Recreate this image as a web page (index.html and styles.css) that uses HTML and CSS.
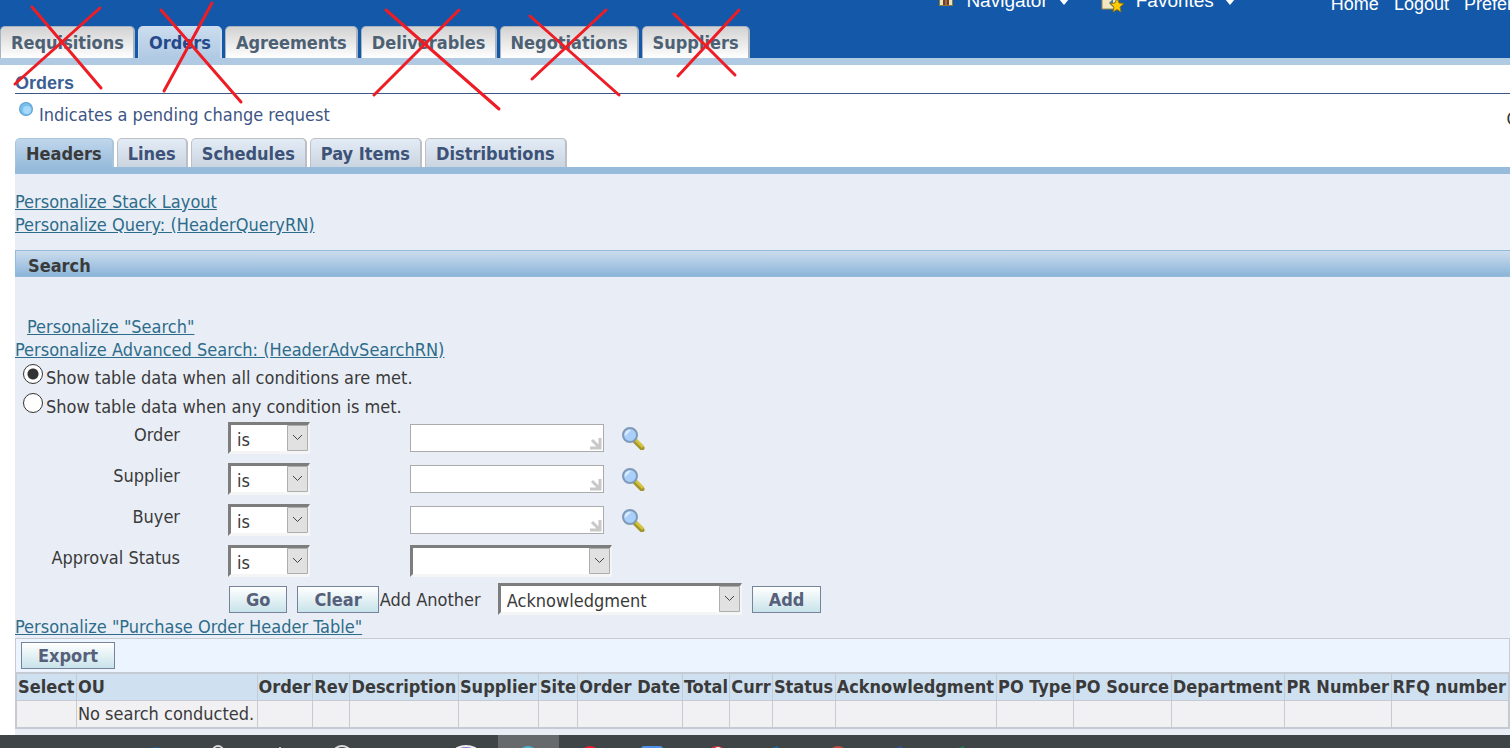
FILE: index.html
```html
<!DOCTYPE html>
<html lang="en">
<head>
  <meta charset="UTF-8">
  <meta name="viewport" content="width=device-width, initial-scale=1.0">
  <title>Orders</title>
  <link rel="stylesheet" href="styles.css">
</head>
<body>
  <header class="top">
    <div class="global">
      <a class="menu" href="#">
        <svg width="16" height="16" viewBox="0 0 16 16"><path d="M0 0h14v16H0z" fill="#8a7a3c"/><path d="M1 0h12v15H1z" fill="#efe2b4"/><path d="M4 0h6v15H4z" fill="#6d3f2a"/><path d="M6 0h2v15H6z" fill="#a0674a"/></svg>
        Navigator
        <svg class="arrow" width="10" height="6" viewBox="0 0 10 6"><path d="M0 0h10L5 6z" fill="#fff"/></svg>
      </a>
      <a class="menu fav" href="#">
        <svg width="24" height="23" viewBox="0 0 24 23"><path d="M1 1h16v18H1z" fill="#f3e8bf" stroke="#a08a4a"/><path d="M8 13l4-4v8z" fill="#3b79b8"/><path d="M16 8l2 5 5 .5-4 3.500 1 5-4-2.500-4 2.500 1-5-4-3.500 5-.5z" fill="#ffcb05" stroke="#8f7410"/></svg>
        Favorites
        <svg class="arrow" width="10" height="6" viewBox="0 0 10 6"><path d="M0 0h10L5 6z" fill="#fff"/></svg>
      </a>
      <a class="link" href="#">Home</a>
      <a class="link" href="#">Logout</a>
      <a class="link" href="#">Preferences</a>
    </div>
    <nav class="tabs">
      <a href="#">Requisitions</a>
      <a href="#" class="active">Orders</a>
      <a href="#">Agreements</a>
      <a href="#">Deliverables</a>
      <a href="#">Negotiations</a>
      <a href="#">Suppliers</a>
    </nav>
  </header>

  <main>
    <h1>Orders</h1>
    <div class="note">
      <svg width="16" height="16" viewBox="0 0 16 16"><circle cx="8" cy="8" r="7" fill="#5b9fd0"/><circle cx="8" cy="8" r="6" fill="#79bfec"/><circle cx="9" cy="9" r="4" fill="#a5d9f9"/></svg>
      <span>Indicates a pending change request</span>
      <span class="org">Orders</span>
    </div>

    <nav class="subtabs">
      <a href="#" class="active">Headers</a>
      <a href="#">Lines</a>
      <a href="#">Schedules</a>
      <a href="#">Pay Items</a>
      <a href="#">Distributions</a>
    </nav>

    <div class="content">
      <div class="links first">
        <a href="#">Personalize Stack Layout</a>
        <a href="#">Personalize Query: (HeaderQueryRN)</a>
      </div>

      <h2>Search</h2>

      <div class="links second">
        <a class="indent" href="#">Personalize "Search"</a>
        <a href="#">Personalize Advanced Search: (HeaderAdvSearchRN)</a>
      </div>

      <form>
        <label class="radio"><input type="radio" name="match" checked><span>Show table data when all conditions are met.</span></label>
        <label class="radio"><input type="radio" name="match"><span>Show table data when any condition is met.</span></label>

        <div class="criteria">
          <label for="order">Order</label>
          <select aria-label="Order condition"><option>is</option></select>
          <div class="lov">
            <input type="text" id="order">
            <svg class="corner" width="12" height="12" viewBox="0 0 12 12"><path d="M2 2l7 7M10 0v10H0" fill="none" stroke="#c8c8c8" stroke-width="3"/></svg>
            <button type="button" class="find" aria-label="Search for Order"><svg width="24" height="24" viewBox="0 0 24 24"><path d="M13 14l8 8" stroke="#a3952c" stroke-width="5" stroke-linecap="round"/><path d="M14 13l8 8" stroke="#d2c23c" stroke-width="3"/><circle cx="9" cy="9" r="7" fill="#a9d0fb" stroke="#8099b8" stroke-width="2"/><path d="M4 10a5 5 0 0 1 6-6z" fill="#deedff"/></svg></button>
          </div>

          <label for="supplier">Supplier</label>
          <select aria-label="Supplier condition"><option>is</option></select>
          <div class="lov">
            <input type="text" id="supplier">
            <svg class="corner" width="12" height="12" viewBox="0 0 12 12"><path d="M2 2l7 7M10 0v10H0" fill="none" stroke="#c8c8c8" stroke-width="3"/></svg>
            <button type="button" class="find" aria-label="Search for Supplier"><svg width="24" height="24" viewBox="0 0 24 24"><path d="M13 14l8 8" stroke="#a3952c" stroke-width="5" stroke-linecap="round"/><path d="M14 13l8 8" stroke="#d2c23c" stroke-width="3"/><circle cx="9" cy="9" r="7" fill="#a9d0fb" stroke="#8099b8" stroke-width="2"/><path d="M4 10a5 5 0 0 1 6-6z" fill="#deedff"/></svg></button>
          </div>

          <label for="buyer">Buyer</label>
          <select aria-label="Buyer condition"><option>is</option></select>
          <div class="lov">
            <input type="text" id="buyer">
            <svg class="corner" width="12" height="12" viewBox="0 0 12 12"><path d="M2 2l7 7M10 0v10H0" fill="none" stroke="#c8c8c8" stroke-width="3"/></svg>
            <button type="button" class="find" aria-label="Search for Buyer"><svg width="24" height="24" viewBox="0 0 24 24"><path d="M13 14l8 8" stroke="#a3952c" stroke-width="5" stroke-linecap="round"/><path d="M14 13l8 8" stroke="#d2c23c" stroke-width="3"/><circle cx="9" cy="9" r="7" fill="#a9d0fb" stroke="#8099b8" stroke-width="2"/><path d="M4 10a5 5 0 0 1 6-6z" fill="#deedff"/></svg></button>
          </div>

          <label for="status">Approval Status</label>
          <select aria-label="Approval Status condition"><option>is</option></select>
          <select class="status" id="status"><option></option></select>
        </div>

        <div class="actions">
          <button type="button">Go</button>
          <button type="button" class="clear">Clear</button>
          <label for="another">Add Another</label>
          <select id="another"><option>Acknowledgment</option></select>
          <button type="button">Add</button>
        </div>
      </form>

      <div class="links">
        <a href="#">Personalize "Purchase Order Header Table"</a>
      </div>

      <div class="toolbar"><button type="button">Export</button></div>
      <table>
        <thead>
          <tr>
            <th>Select</th>
            <th>OU</th>
            <th>Order</th>
            <th>Rev</th>
            <th>Description</th>
            <th>Supplier</th>
            <th>Site</th>
            <th>Order Date</th>
            <th>Total</th>
            <th>Curr</th>
            <th>Status</th>
            <th>Acknowledgment</th>
            <th>PO Type</th>
            <th>PO Source</th>
            <th>Department</th>
            <th>PR Number</th>
            <th>RFQ number</th>
          </tr>
        </thead>
        <tbody>
          <tr>
            <td></td><td>No search conducted.</td><td></td><td></td><td></td><td></td><td></td><td></td><td></td>
            <td></td><td></td><td></td><td></td><td></td><td></td><td></td><td></td>
          </tr>
        </tbody>
      </table>
    </div>
  </main>

  <footer class="taskbar">
    <svg width="1000" height="13" viewBox="0 0 1000 13">
      <path d="M498 0h61v13h-61z" fill="#666a6d"/>
      <g fill="none" stroke="#d8d8d8" stroke-width="2"><circle cx="218" cy="16" r="5"/><ellipse cx="342" cy="17" rx="8" ry="6"/></g>
      <ellipse cx="156" cy="16" rx="7" ry="4" fill="#1b5c8c"/>
      <path d="M279 12h2v1h-2z" fill="#bbb"/>
      <ellipse cx="466" cy="16" rx="12" ry="6" fill="#eee"/><ellipse cx="466" cy="16" rx="9" ry="4" fill="#8c74d8"/>
      <circle cx="528" cy="21" r="10" fill="#4fb0d2"/>
      <circle cx="590" cy="21" r="10" fill="#ef1c2b"/>
      <rect x="641" y="11" width="22" height="8" rx="3" fill="#4c91ea"/>
      <circle cx="717" cy="21" r="10" fill="#d9343e"/><ellipse cx="718" cy="14" rx="3" ry="2" fill="#eee"/>
      <path d="M772 13l6-2v2z" fill="#1668a8"/>
      <circle cx="838" cy="21" r="10" fill="#c14a40"/>
      <path d="M896 13l6-2v2z" fill="#2a56a8"/><path d="M958 13l6-2v2z" fill="#1c7a48"/>
    </svg>
  </footer>

  <!-- red marker strokes over the tabs -->
  <svg class="marks" width="760" height="120" viewBox="0 0 760 120">
    <g fill="none" stroke="#ee1c24" stroke-width="3" stroke-linecap="round">
      <path d="M32 7L101 88M100 8L15 84"/>
      <path d="M161 10L241 102M212 3L164 91"/>
      <path d="M386 10L499 109M459 10L374 95"/>
      <path d="M530 16L619 95M606 10L532 79"/>
      <path d="M674 14L735 75M739 10L678 76"/>
    </g>
  </svg>
</body>
</html>
```
FILE: styles.css
```css
* {
  box-sizing: border-box;
}
body {
  margin: 0;
  min-height: 100vh;
  display: flex;
  flex-direction: column;
  overflow: hidden;
  background: white;
  color: #3a3a3a;
  font-family: "DejaVu Sans Condensed", "DejaVu Sans", sans-serif;
  font-size: 18px;
  line-height: 23px;
}
svg {
  display: block;
}
input, select, button {
  font: inherit;
  color: inherit;
  margin: 0;
}

/* Header */
.top {
  background: #1358a9;
  border-bottom: 7px solid #b0cae4;
}
.global {
  display: flex;
  height: 36px;
  margin: -10px -51px 0 0;
  justify-content: flex-end;
  font: 18px/20px "Liberation Sans", Arial, sans-serif;
}
.global a {
  color: white;
  text-decoration: none;
}
.menu {
  display: flex;
  gap: 11px;
  margin-right: 32px;
  font-size: 19px;
  line-height: 22px;
}
.arrow {
  margin-top: 9px;
}
.link {
  margin: 4px 0 0 15px;
}
.fav {
  margin-right: 81px;
}
.tabs {
  display: flex;
  gap: 3px;
}
.tabs a {
  height: 32px;
  padding: 4px 9px 0 10px;
  border: 1px solid #a9b4c2;
  border-width: 1px 2px 0 1px;
  border-radius: 5px 5px 0 0;
  background: linear-gradient(#d2d2d2, #ffffff);
  color: #4d6175;
  font-weight: bold;
  text-decoration: none;
}
.tabs .active {
  background: linear-gradient(#cbdcee, #b0cae4);
  border-color: #cbdcee;
  color: #25488a;
}

/* Page */
main {
  flex: 1;
  padding-left: 15px;
  display: flex;
  flex-direction: column;
}
h1 {
  margin: 0;
  padding-top: 7px;
  height: 29px;
  border-bottom: 1px solid #3c5685;
  color: #3c5f93;
  font: bold 18px/22px "Liberation Sans", Arial, sans-serif;
}
.note {
  display: flex;
  gap: 5px;
  padding: 7px 0 0 3px;
  height: 44px;
  color: #3c5685;
}
.note span {
  padding-top: 2px;
  white-space: nowrap;
}
.note .org {
  margin: 4px -51px 0 auto;
  color: #333;
}
.subtabs {
  display: flex;
  gap: 3px;
  border-bottom: 7px solid #97bbdb;
}
.subtabs a {
  height: 29px;
  padding: 3px 10px 0;
  border: 1px solid #bcbfc3;
  border-width: 1px 2px 0 1px;
  border-radius: 5px 5px 0 0;
  background: linear-gradient(#e3ecf6, #cbd5df);
  color: #3c5278;
  font-weight: bold;
  text-decoration: none;
}
.subtabs .active {
  background: linear-gradient(#c0d7ec, #97bbdb);
  border-color: #a9c5de;
  color: #3a3a3a;
}
.content {
  flex: 1;
  background: #e9eef6;
}
.links {
  display: flex;
  flex-direction: column;
  align-items: flex-start;
}
.links a {
  color: #2d6c8a;
}
.links .indent {
  margin-left: 12px;
}
.first {
  padding: 16px 0 14px;
}
.second {
  padding-top: 38px;
}
h2 {
  margin: 0;
  padding: 3px 12px 0;
  height: 27px;
  border: 1px solid #95bbdc;
  border-right: 0;
  background: linear-gradient(#cbdcee, #8cb5d9);
  font-size: 18px;
  line-height: 23px;
}

/* Search form */
.radio {
  display: flex;
  gap: 3px;
  height: 29px;
  padding-left: 8px;
}
.radio input {
  appearance: none;
  width: 20px;
  height: 20px;
  margin-top: 3px;
  border: 1px solid #333;
  border-radius: 50%;
  background: white;
}
.radio input:checked {
  background: radial-gradient(circle, #333 5px, white 6px);
}
.radio span {
  padding-top: 5px;
}
.criteria {
  display: grid;
  grid-template-columns: 165px 82px 300px;
  column-gap: 48px;
  grid-auto-rows: 32px;
  row-gap: 9px;
  padding-top: 3px;
}
.criteria > label {
  padding-top: 1px;
  text-align: right;
}
select {
  appearance: none;
  height: 32px;
  padding: 3px 6px 0;
  border: 3px solid;
  border-color: #7d7d7d #f5f5f5 #f5f5f5 #7d7d7d;
  border-right-width: 2px;
  border-radius: 0;
  background: white url("data:image/svg+xml,%3Csvg xmlns='http://www.w3.org/2000/svg' width='21' height='26'%3E%3Cpath d='M.5.5h20v25H.5z' fill='%23e1e1e1' stroke='%23adadad'/%3E%3Cpath d='M6 10l4.500 4.500L15 10' fill='none' stroke='%23444'/%3E%3C/svg%3E") no-repeat right top;
}
.lov {
  display: flex;
  align-items: center;
  position: relative;
  margin-left: 52px;
}
.lov input {
  width: 194px;
  height: 28px;
  border: 1px solid #ababab;
  background: white;
}
.corner {
  position: absolute;
  left: 180px;
  top: 16px;
}
.find {
  margin-left: 17px;
  padding: 0;
  border: 0;
  background: none;
}
.status {
  width: 202px;
  margin-left: 52px;
}
.actions {
  display: flex;
  align-items: center;
  padding: 6px 0 0 214px;
}
.actions button, .toolbar button {
  height: 27px;
  padding: 0 16px;
  border: 1px solid #76839b;
  background: linear-gradient(#ffffff, #c8e3ea);
  color: #56607a;
  font-weight: bold;
}
.actions .clear {
  margin-left: 10px;
}
.actions label {
  margin: 0 17px 0 1px;
}
.actions select {
  width: 244px;
  margin-right: 10px;
}

/* Results */
.toolbar {
  height: 34px;
  padding: 3px 5px;
  border: 1px solid #c6cad3;
  border-bottom: 0;
  background: #ecf4ff;
}
table {
  width: 100%;
  border: 2px solid #c6cad3;
  border-collapse: collapse;
  margin-bottom: 6px;
}
th, td {
  height: 27px;
  padding: 1px;
  border: 1px solid #c6cad3;
  text-align: left;
  white-space: nowrap;
}
th {
  background: #cfe0f0;
}
td {
  height: 28px;
  background: #f1f1f4;
}
.taskbar {
  background: #3f4447;
  height: 13px;
}
.marks {
  position: absolute;
  top: 0;
  left: 0;
  pointer-events: none;
}
```
